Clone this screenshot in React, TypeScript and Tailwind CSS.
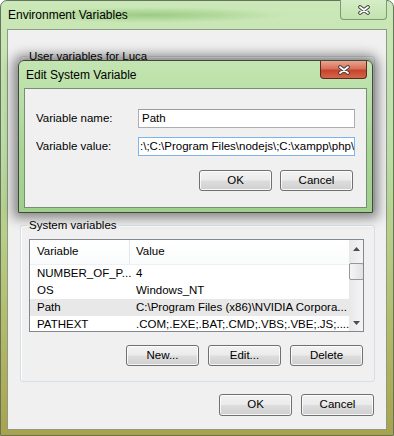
import React from "react";

const btn =
  "h-[21px] w-[73px] rounded-[3px] border border-[#707070] bg-[linear-gradient(#f2f2f2,#ebebeb_48%,#dddddd_52%,#cfcfcf)] shadow-[inset_0_0_0_1px_rgba(255,255,255,0.8)] flex items-center justify-center text-[11.5px] text-black";

function CloseGlyph() {
  return (
    <svg width="14" height="10" viewBox="0 0 14 10">
      <path d="M3 2 L11 8 M11 2 L3 8" stroke="#3b3b3b" strokeWidth="3.6" strokeLinecap="round" />
      <path d="M3 2 L11 8 M11 2 L3 8" stroke="#ffffff" strokeWidth="1.8" strokeLinecap="round" />
    </svg>
  );
}

function GroupBox({ label, className, children }: { label: string; className: string; children?: React.ReactNode }) {
  return (
    <div className={`relative rounded-[3px] border border-[#d5dfe5] shadow-[inset_1px_1px_0_#ffffff] ${className}`}>
      <span className="absolute -top-[9px] left-[6px] bg-[#f0f0f0] px-[2px] text-[11.5px] leading-[16px] text-black">
        {label}
      </span>
      {children}
    </div>
  );
}

const rows = [
  { name: "NUMBER_OF_P...", value: "4" },
  { name: "OS", value: "Windows_NT" },
  { name: "Path", value: "C:\\Program Files (x86)\\NVIDIA Corpora...", selected: true },
  { name: "PATHEXT", value: ".COM;.EXE;.BAT;.CMD;.VBS;.VBE;.JS;...." },
];

function Arrow({ up }: { up?: boolean }) {
  return (
    <svg width="7" height="4" viewBox="0 0 7 4">
      <path d={up ? "M0 4 L3.5 0 L7 4 Z" : "M0 0 L3.5 4 L7 0 Z"} fill="#4d4d4d" />
    </svg>
  );
}

function ListView() {
  return (
    <div className="h-[93px] border border-[#828790] bg-white flex overflow-hidden">
      <div className="flex-1 flex flex-col">
        <div className="h-[25px] shrink-0 flex items-center text-[11.5px] text-black bg-[linear-gradient(#ffffff,#fafbfc)] border-b border-[#f0f0f0]">
          <div className="w-[100px] h-full flex items-center pl-[7px] border-r border-[#e3e8ee]">Variable</div>
          <div className="pl-[6px]">Value</div>
        </div>
        {rows.map((r) => (
          <div
            key={r.name}
            className={`h-[17px] shrink-0 flex items-center text-[11.5px] text-black ${r.selected ? "bg-[#e8e8e8]" : ""}`}
          >
            <div className="w-[100px] pl-[7px] whitespace-nowrap">{r.name}</div>
            <div className="pl-[6px] whitespace-nowrap">{r.value}</div>
          </div>
        ))}
      </div>
      {/* scrollbar */}
      <div className="w-[17px] bg-[linear-gradient(90deg,#e8e8e8,#f5f5f5)] flex flex-col items-center">
        <div className="h-[17px] flex items-center justify-center">
          <Arrow up />
        </div>
        <div className="mt-[6px] h-[17px] w-[15px] rounded-[2px] border border-[#979797] bg-[linear-gradient(90deg,#f5f5f5,#e2e2e2)]" />
        <div className="flex-1" />
        <div className="h-[17px] flex items-center justify-center">
          <Arrow />
        </div>
      </div>
    </div>
  );
}

function EditDialog() {
  return (
    <div className="absolute left-[18px] top-[60px] w-[355px] h-[153px] rounded-t-[6px] border border-[#3f4a3c] bg-[linear-gradient(180deg,#c4e5b2,#a8d594_60%,#9fd08b)] shadow-[0_0_12px_5px_rgba(0,0,0,0.45)] flex flex-col">
      <div className="h-[27px] flex items-center relative">
        <span className="pl-[7px] text-[12px] text-black">Edit System Variable</span>
        <div className="absolute right-[5px] top-0 h-[18px] w-[47px] rounded-b-[4px] border border-t-0 border-[#5b2a20] bg-[linear-gradient(#e9a48e,#d8705a_45%,#c8432b_55%,#d2674b)] flex items-center justify-center">
          <CloseGlyph />
        </div>
      </div>
      <div className="mx-[5px] h-[120px] border border-[#7a8c75] bg-[#f0f0f0] flex flex-col pl-[11px] pr-[11px]">
        <div className="mt-[20px] flex items-center h-[19px]">
          <span className="w-[102px] text-[11.5px] text-black">Variable name:</span>
          <div className="flex-1 h-[19px] border border-[#abadb3] border-t-[#999ca2] bg-white flex items-center pl-[3px] text-[11.5px] text-black">
            Path
          </div>
        </div>
        <div className="mt-[9px] flex items-center h-[19px]">
          <span className="w-[102px] text-[11.5px] text-black">Variable value:</span>
          <div className="flex-1 min-w-0 h-[19px] border border-[#7eb4ea] bg-white flex items-center pl-[1px] text-[11.5px] text-black whitespace-nowrap overflow-hidden">
            {":\\;C:\\Program Files\\nodejs\\;C:\\xampp\\php\\"}
            <span className="inline-block w-[1px] h-[13px] bg-black" />
          </div>
        </div>
        <div className="mt-[14px] flex justify-end gap-[8px] pr-[2px]">
          <div className={`${btn} border-[#3c7fb1] shadow-[inset_0_0_0_1px_#bde3f7]`}>OK</div>
          <div className={btn}>Cancel</div>
        </div>
      </div>
    </div>
  );
}

export default function App() {
  return (
    <div className="relative w-[394px] h-[436px] overflow-hidden bg-white font-['Liberation_Sans',Arial,sans-serif]">
      <div className="w-full h-full rounded-t-[7px] border border-[#66745e] bg-[linear-gradient(180deg,#cbe8b8_0%,#bcdfa6_35%,#b5bf70_70%,#a9a24c_100%)] flex flex-col">
        {/* title bar */}
        <div className="h-[28px] shrink-0 flex items-center relative bg-[radial-gradient(ellipse_at_38%_50%,#9ccb83_0%,rgba(156,203,131,0)_40%)]">
          <span className="pl-[7px] text-[12px] text-black">Environment Variables</span>
          <div className="absolute right-[6px] -top-[1px] h-[20px] w-[47px] rounded-b-[4px] border border-t-0 border-[#7e9a74] bg-[linear-gradient(#d4edc6,#c2e3ae)] flex items-center justify-center">
            <CloseGlyph />
          </div>
        </div>
        {/* client area */}
        <div className="mx-[6px] h-[401px] shrink-0 border border-[#8c9a86] bg-[#f0f0f0] flex flex-col px-[11px]">
          <GroupBox label="User variables for Luca" className="mt-[26px] h-[156px] ml-[1px]" />
          <GroupBox label="System variables" className="mt-[13px] h-[157px] ml-[1px] pt-[13px] pl-[8px] pr-[10px]">
            <ListView />
            <div className="mt-[13px] flex justify-end gap-[9px] pr-[1px]">
              <div className={btn}>New...</div>
              <div className={btn}>Edit...</div>
              <div className={btn}>Delete</div>
            </div>
          </GroupBox>
          <div className="mt-[12px] flex justify-end gap-[9px] pr-[1px]">
            <div className={`${btn} h-[22px]`}>OK</div>
            <div className={`${btn} h-[22px]`}>Cancel</div>
          </div>
        </div>
      </div>
      <EditDialog />
    </div>
  );
}
